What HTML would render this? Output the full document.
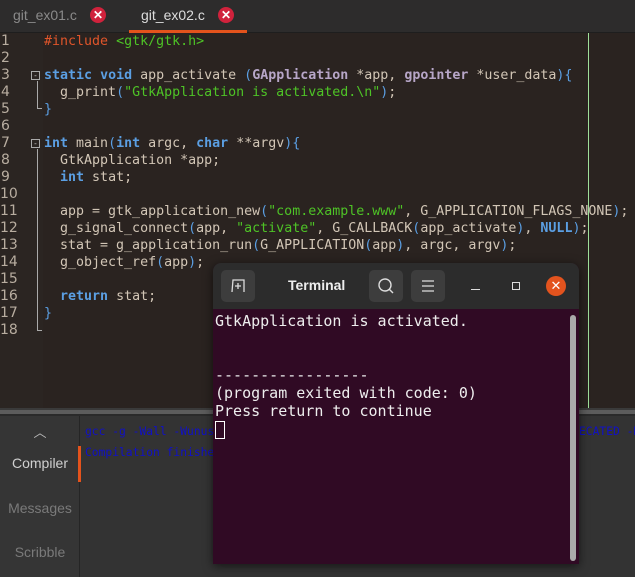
<!DOCTYPE html>
<html><head><meta charset="utf-8"><style>
*{margin:0;padding:0;box-sizing:border-box}
body{width:635px;height:577px;overflow:hidden;background:#2b2522;font-family:"Liberation Sans",sans-serif;position:relative}
.tabs{position:absolute;left:0;top:0;width:635px;height:33px;background:#2d2c2c;border-bottom:1px solid #1e1e1e}
.tab{position:absolute;top:7px;font-size:14px;color:#8a8a8a}
.x{position:absolute;top:7px;width:16px;height:16px;border-radius:50%;background:#d0223c;color:#fff;font-size:12px;line-height:16px;text-align:center;font-weight:bold}
.gut{position:absolute;left:0;top:33px;width:43px;height:375px;background:#2b2522}
.code{position:absolute;left:43px;top:33px;width:592px;height:375px;background:#2a2320}
.ln{position:absolute;left:0;width:20px;text-align:left;font-family:"DejaVu Sans",sans-serif;font-size:14px;color:#b8ada0;padding-left:1px}
.cl{position:absolute;left:44px;white-space:pre;font-family:"DejaVu Sans Mono",monospace;font-size:13.3px;color:#d2c6b6}
.k{color:#5b9fe3;font-weight:bold}.s{color:#4ec326}.p{color:#5b9fe3}.t{color:#b7a6c8;font-weight:bold}.pp{color:#e0552a}
.fold{position:absolute;left:31px;width:9px;height:9px;border:1px solid #aaa;font-size:8px;line-height:7px;text-align:center;color:#ccc}
.vl{position:absolute;left:37px;width:1px;background:#aaa}
.split{position:absolute;left:0;top:408px;width:635px;height:8px;background:#5c5c5c;border-top:2px solid #3a3a3a;border-bottom:2px solid #2a2a2a}
.panel{position:absolute;left:0;top:416px;width:635px;height:161px;background:#333}
.side{position:absolute;left:0;top:416px;width:80px;height:161px;background:#353535;border-right:1px solid #252525}
.si{position:absolute;left:0;width:80px;text-align:center;font-size:14px}
.out{position:absolute;white-space:pre;font-family:"DejaVu Sans Mono",monospace;font-size:11.3px;color:#1010c8}
.term{position:absolute;left:213px;top:263px;width:366px;height:301px;background:#300a24;border-radius:8px 8px 0 0;overflow:hidden;box-shadow:0 2px 10px rgba(0,0,0,.6)}
.tb{position:absolute;left:0;top:0;width:366px;height:46px;background:#2c2c2c}
.btn{position:absolute;top:7px;width:34px;height:32px;background:#3d3d3d;border-radius:5px}
.tt{position:absolute;font-family:"DejaVu Sans Mono",monospace;font-size:15px;color:#eee;white-space:pre;left:2px}
</style></head><body>
<div class="tabs">
<div class="tab" style="left:13px">git_ex01.c</div><div class="x" style="left:90px">✕</div>
<div class="tab" style="left:141px;color:#ddd">git_ex02.c</div><div class="x" style="left:218px">✕</div>
<div style="position:absolute;left:129px;top:30px;width:118px;height:3px;background:#e4531c"></div>
</div>
<div class="gut"></div><div class="code"></div>
<div style="position:absolute;left:588px;top:33px;width:1px;height:375px;background:#9fe09a"></div>
<div class="ln" style="top:33px">1</div><div class="ln" style="top:50px">2</div><div class="ln" style="top:67px">3</div><div class="ln" style="top:84px">4</div><div class="ln" style="top:101px">5</div><div class="ln" style="top:118px">6</div><div class="ln" style="top:135px">7</div><div class="ln" style="top:152px">8</div><div class="ln" style="top:169px">9</div><div class="ln" style="top:203px;left:-1px">11</div><div class="ln" style="top:186px;left:-1px">10</div><div class="ln" style="top:220px;left:-1px">12</div><div class="ln" style="top:237px;left:-1px">13</div><div class="ln" style="top:254px;left:-1px">14</div><div class="ln" style="top:271px;left:-1px">15</div><div class="ln" style="top:288px;left:-1px">16</div><div class="ln" style="top:305px;left:-1px">17</div><div class="ln" style="top:322px;left:-1px">18</div>
<div class="fold" style="top:71px">-</div><div class="vl" style="top:81px;height:28px"></div><div style="position:absolute;left:37px;top:108px;width:5px;height:1px;background:#aaa"></div>
<div class="fold" style="top:139px">-</div><div class="vl" style="top:149px;height:182px"></div><div style="position:absolute;left:37px;top:330px;width:5px;height:1px;background:#aaa"></div>
<div class="cl" style="top:34px"><span class="pp">#include</span> <span class="s">&lt;gtk/gtk.h&gt;</span></div>
<div class="cl" style="top:68px"><span class="k">static</span> <span class="k">void</span> app_activate <span class="p">(</span><span class="t">GApplication</span> *app, <span class="t">gpointer</span> *user_data<span class="p">){</span></div>
<div class="cl" style="top:85px">  g_print<span class="p">(</span><span class="s">"GtkApplication is activated.\n"</span><span class="p">)</span>;</div>
<div class="cl" style="top:102px"><span class="p">}</span></div>
<div class="cl" style="top:136px"><span class="k">int</span> main<span class="p">(</span><span class="k">int</span> argc, <span class="k">char</span> **argv<span class="p">){</span></div>
<div class="cl" style="top:153px">  GtkApplication *app;</div>
<div class="cl" style="top:170px">  <span class="k">int</span> stat;</div>
<div class="cl" style="top:204px">  app = gtk_application_new<span class="p">(</span><span class="s">"com.example.www"</span>, G_APPLICATION_FLAGS_NONE<span class="p">)</span>;</div>
<div class="cl" style="top:221px">  g_signal_connect<span class="p">(</span>app, <span class="s">"activate"</span>, G_CALLBACK<span class="p">(</span>app_activate<span class="p">)</span>, <span class="k">NULL</span><span class="p">)</span>;</div>
<div class="cl" style="top:238px">  stat = g_application_run<span class="p">(</span>G_APPLICATION<span class="p">(</span>app<span class="p">)</span>, argc, argv<span class="p">)</span>;</div>
<div class="cl" style="top:255px">  g_object_ref<span class="p">(</span>app<span class="p">)</span>;</div>
<div class="cl" style="top:289px">  <span class="k">return</span> stat;</div>
<div class="cl" style="top:306px"><span class="p">}</span></div>
<div class="split"></div>
<div class="panel"></div>
<div class="side">
<div class="si" style="top:6px;color:#bbb;font-size:13px">︿</div>
<div class="si" style="top:39px;color:#d0d0d0">Compiler</div>
<div style="position:absolute;left:78px;top:30px;width:3px;height:36px;background:#e4531c"></div>
<div class="si" style="top:84px;color:#7a7a7a">Messages</div>
<div class="si" style="top:128px;color:#7a7a7a">Scribble</div>
</div>
<div class="out" style="top:425px;left:85px">gcc -g -Wall -Wunused</div>
<div class="out" style="top:425px;left:579px">ECATED -D</div>
<div class="out" style="top:446px;left:85px">Compilation finished</div>
<div class="term">
<div class="tb">
<div class="btn" style="left:8px"><svg width="34" height="32" viewBox="0 0 34 32"><path d="M11 22 L12 10 H23 V22" fill="none" stroke="#ddd" stroke-width="1.3"/><path d="M17 13 V19 M14 16 H20" stroke="#ddd" stroke-width="1.3"/></svg></div>
<div style="position:absolute;left:75px;top:14px;font-size:14px;font-weight:bold;color:#eee">Terminal</div>
<div class="btn" style="left:156px"><svg width="34" height="32"><circle cx="16" cy="15" r="6" fill="none" stroke="#ddd" stroke-width="1.4"/><path d="M20.5 19.5 L24 23" stroke="#ddd" stroke-width="1.4"/></svg></div>
<div class="btn" style="left:198px"><svg width="34" height="32"><path d="M11 11H23M11 16H23M11 21H23" stroke="#ddd" stroke-width="1.3"/></svg></div>
<div style="position:absolute;left:258px;top:26px;width:9px;height:1px;background:#ddd"></div>
<div style="position:absolute;left:299px;top:19px;width:8px;height:8px;border:1px solid #ddd"></div>
<div style="position:absolute;left:333px;top:13px;width:20px;height:20px;border-radius:50%;background:#e3531e;color:#fff;text-align:center;line-height:20px;font-size:13px">✕</div>
</div>
<div class="tt" style="top:49px">GtkApplication is activated.</div>
<div class="tt" style="top:103px">-----------------</div>
<div class="tt" style="top:121px">(program exited with code: 0)</div>
<div class="tt" style="top:139px">Press return to continue</div>
<div style="position:absolute;left:2px;top:158px;width:10px;height:18px;border:1px solid #fff"></div>
<div style="position:absolute;left:357px;top:52px;width:6px;height:246px;background:#aaa;border-radius:3px"></div>
</div>
</body></html>
